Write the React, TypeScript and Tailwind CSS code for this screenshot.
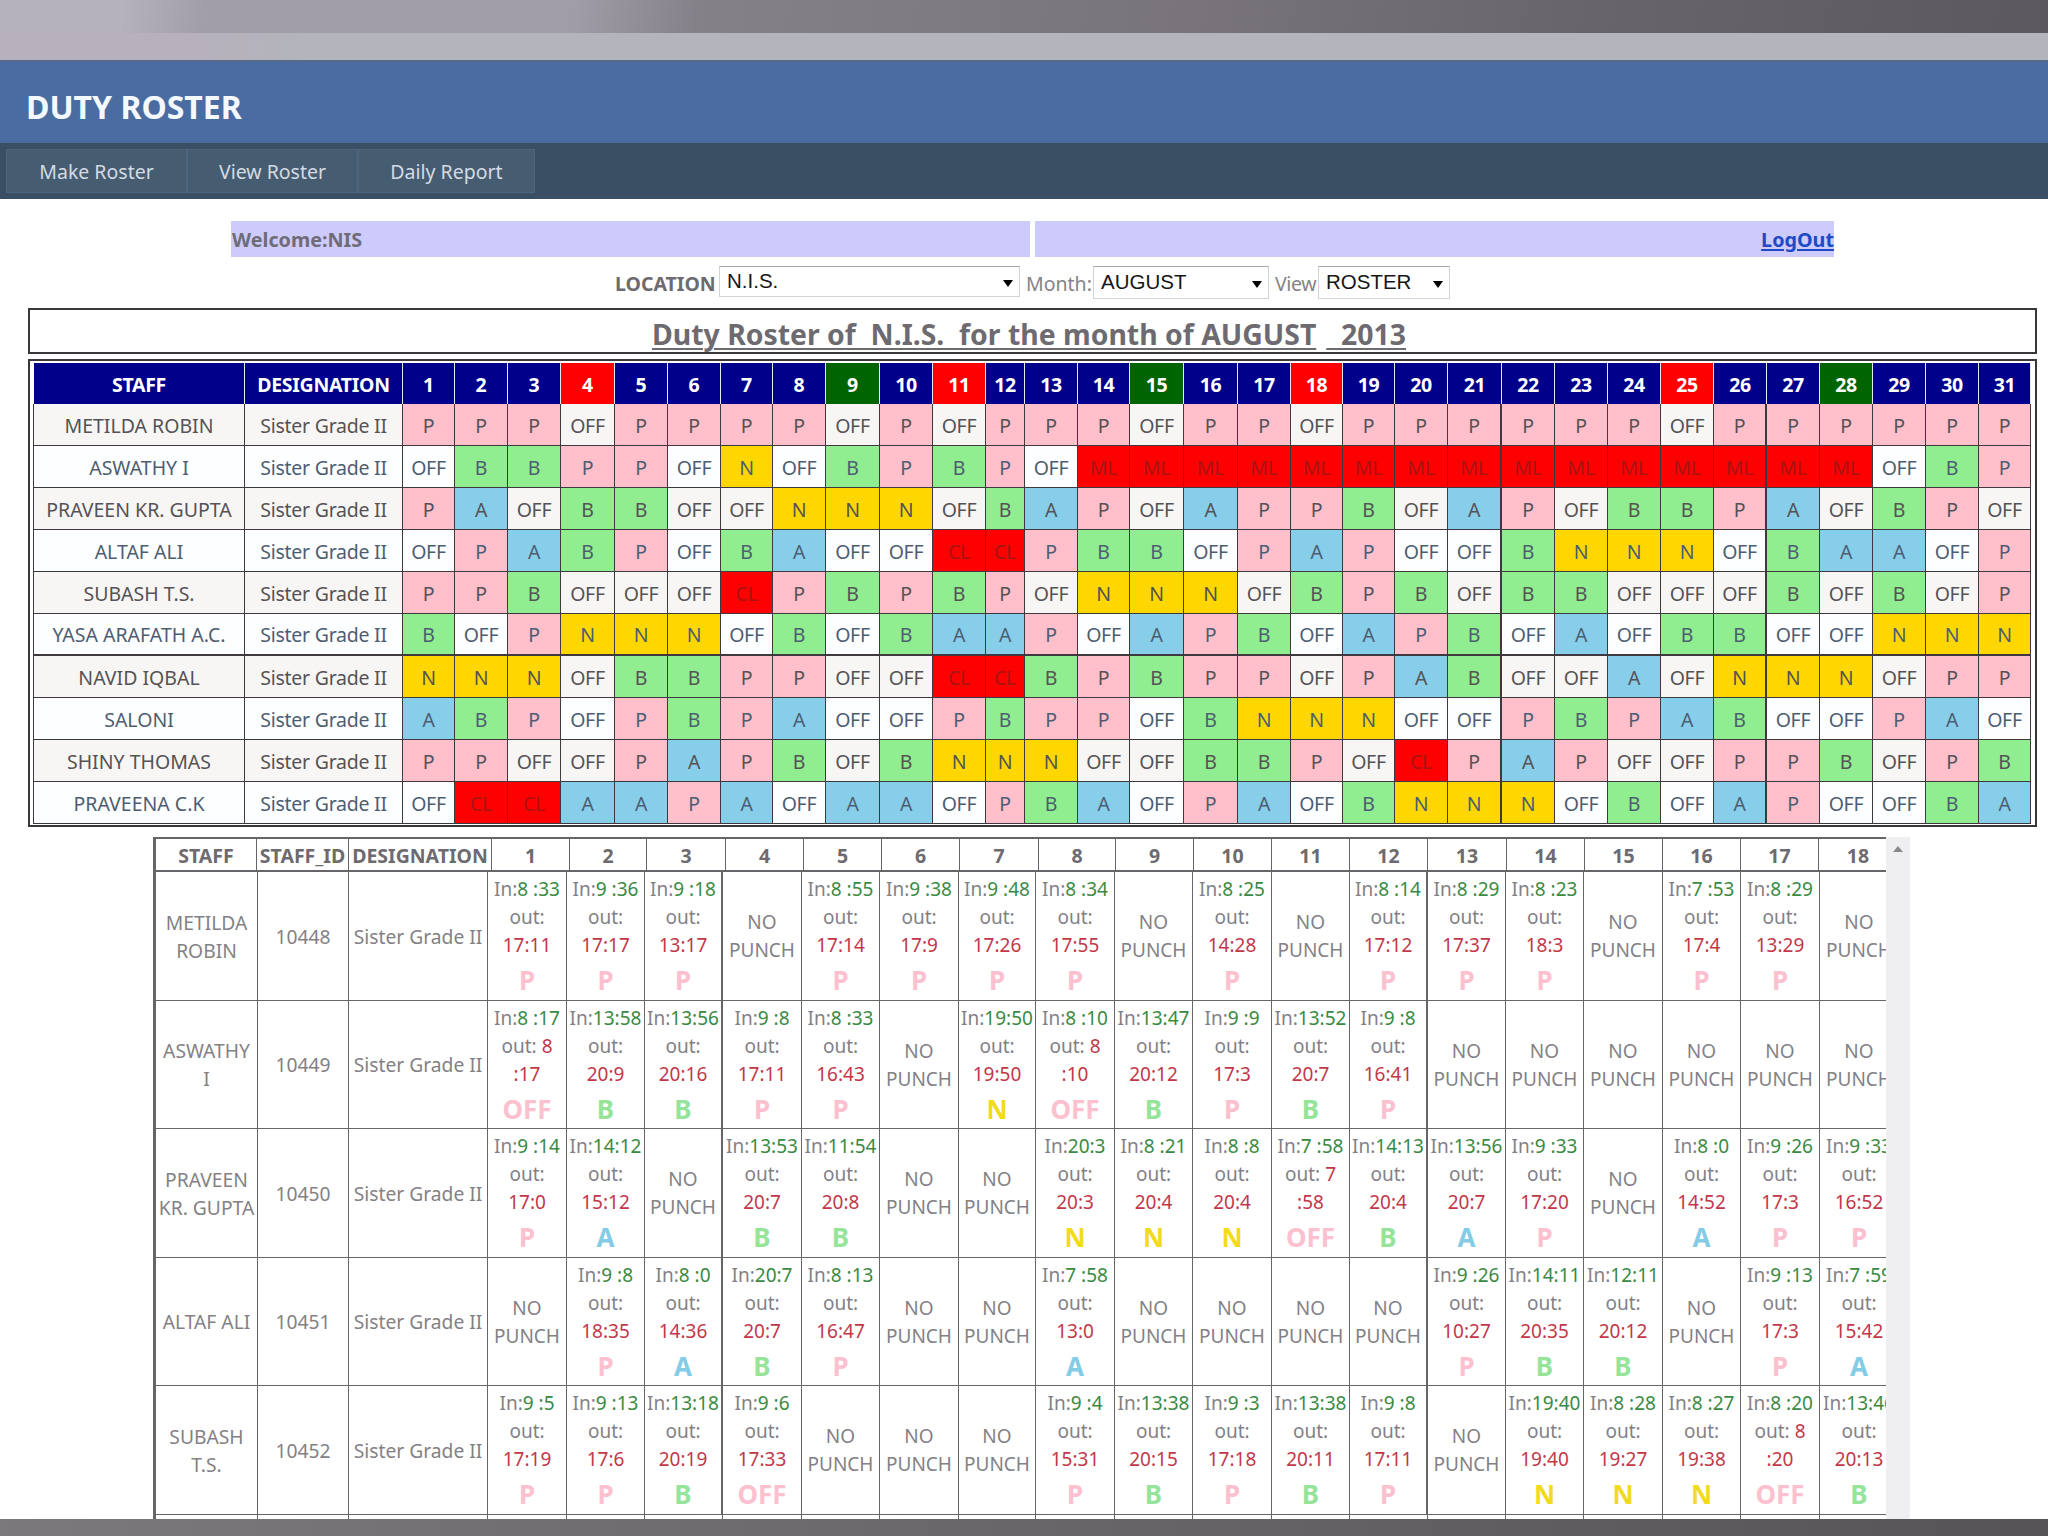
import clsx from 'clsx';

type Shift = 'P' | 'B' | 'A' | 'N' | 'OFF' | 'CL' | 'ML';

type RosterRow = {
  name: string;
  shifts: string;
};

type PunchRow = {
  name: string;
  id: string;
  punches: string[];
};

const MENU = [
  { label: 'Make Roster', className: 'w-[181px]' },
  { label: 'View Roster', className: 'w-[171px]' },
  { label: 'Daily Report', className: 'w-[177px]' },
];

const DAYS = Array.from({ length: 31 }, (_, i) => i + 1);
const SUNDAYS = [4, 11, 18, 25];
const HOLIDAYS = [9, 15, 28];

const ROSTER: RosterRow[] = [
  {
    name: 'METILDA ROBIN',
    shifts:
      'P P P OFF P P P P OFF P OFF P P P OFF P P OFF P P P P P P OFF P P P P P P',
  },
  {
    name: 'ASWATHY I',
    shifts:
      'OFF B B P P OFF N OFF B P B P OFF ML ML ML ML ML ML ML ML ML ML ML ML ML ML ML OFF B P',
  },
  {
    name: 'PRAVEEN KR. GUPTA',
    shifts:
      'P A OFF B B OFF OFF N N N OFF B A P OFF A P P B OFF A P OFF B B P A OFF B P OFF',
  },
  {
    name: 'ALTAF ALI',
    shifts:
      'OFF P A B P OFF B A OFF OFF CL CL P B B OFF P A P OFF OFF B N N N OFF B A A OFF P',
  },
  {
    name: 'SUBASH T.S.',
    shifts:
      'P P B OFF OFF OFF CL P B P B P OFF N N N OFF B P B OFF B B OFF OFF OFF B OFF B OFF P',
  },
  {
    name: 'YASA ARAFATH A.C.',
    shifts:
      'B OFF P N N N OFF B OFF B A A P OFF A P B OFF A P B OFF A OFF B B OFF OFF N N N',
  },
  {
    name: 'NAVID IQBAL',
    shifts:
      'N N N OFF B B P P OFF OFF CL CL B P B P P OFF P A B OFF OFF A OFF N N N OFF P P',
  },
  {
    name: 'SALONI',
    shifts:
      'A B P OFF P B P A OFF OFF P B P P OFF B N N N OFF OFF P B P A B OFF OFF P A OFF',
  },
  {
    name: 'SHINY THOMAS',
    shifts:
      'P P OFF OFF P A P B OFF B N N N OFF OFF B B P OFF CL P A P OFF OFF P P B OFF P B',
  },
  {
    name: 'PRAVEENA C.K',
    shifts:
      'OFF CL CL A A P A OFF A A OFF P B A OFF P A OFF B N N N OFF B OFF A P OFF OFF B A',
  },
];

// Each punch is "in|out|shift"; an empty string means nobody punched that day.
const PUNCHES: PunchRow[] = [
  {
    name: 'METILDA\nROBIN',
    id: '10448',
    punches: [
      '8 :33|17:11|P', '9 :36|17:17|P', '9 :18|13:17|P', '', '8 :55|17:14|P', '9 :38|17:9|P',
      '9 :48|17:26|P', '8 :34|17:55|P', '', '8 :25|14:28|P', '', '8 :14|17:12|P',
      '8 :29|17:37|P', '8 :23|18:3|P', '', '7 :53|17:4|P', '8 :29|13:29|P', '',
    ],
  },
  {
    name: 'ASWATHY\nI',
    id: '10449',
    punches: [
      '8 :17|8 :17|OFF', '13:58|20:9|B', '13:56|20:16|B', '9 :8|17:11|P', '8 :33|16:43|P', '',
      '19:50|19:50|N', '8 :10|8 :10|OFF', '13:47|20:12|B', '9 :9|17:3|P', '13:52|20:7|B', '9 :8|16:41|P',
      '', '', '', '', '', '',
    ],
  },
  {
    name: 'PRAVEEN\nKR. GUPTA',
    id: '10450',
    punches: [
      '9 :14|17:0|P', '14:12|15:12|A', '', '13:53|20:7|B', '11:54|20:8|B', '',
      '', '20:3|20:3|N', '8 :21|20:4|N', '8 :8|20:4|N', '7 :58|7 :58|OFF', '14:13|20:4|B',
      '13:56|20:7|A', '9 :33|17:20|P', '', '8 :0|14:52|A', '9 :26|17:3|P', '9 :33|16:52|P',
    ],
  },
  {
    name: 'ALTAF ALI',
    id: '10451',
    punches: [
      '', '9 :8|18:35|P', '8 :0|14:36|A', '20:7|20:7|B', '8 :13|16:47|P', '',
      '', '7 :58|13:0|A', '', '', '', '',
      '9 :26|10:27|P', '14:11|20:35|B', '12:11|20:12|B', '', '9 :13|17:3|P', '7 :59|15:42|A',
    ],
  },
  {
    name: 'SUBASH\nT.S.',
    id: '10452',
    punches: [
      '9 :5|17:19|P', '9 :13|17:6|P', '13:18|20:19|B', '9 :6|17:33|OFF', '', '',
      '', '9 :4|15:31|P', '13:38|20:15|B', '9 :3|17:18|P', '13:38|20:11|B', '9 :8|17:11|P',
      '', '19:40|19:40|N', '8 :28|19:27|N', '8 :27|19:38|N', '8 :20|8 :20|OFF', '13:46|20:13|B',
    ],
  },
];

const SHIFT_FILL: Record<Shift, string> = {
  P: 'bg-[#ffbfcb]',
  B: 'bg-[#90ee90]',
  A: 'bg-[#87ceeb]',
  N: 'bg-[#ffd700]',
  OFF: '',
  CL: 'bg-[#ff0000] text-[#a81414]',
  ML: 'bg-[#ff0000] text-[#a81414]',
};

const SHIFT_TEXT: Record<string, string> = {
  P: 'text-[#fcc0cf]',
  OFF: 'text-[#fcc0cf]',
  B: 'text-[#96e49a]',
  A: 'text-[#84cbe6]',
  N: 'text-[#f2da1c]',
};

const ROSTER_COLS =
  'grid-cols-[211px_158px_52px_53px_53px_54px_53px_53px_52px_53px_54px_53px_53px_39px_53px_52px_54px_54px_53px_52px_52px_53px_54px_53px_53px_53px_53px_53px_53px_53px_53px_53px_52px]';

const PUNCH_HEAD_COLS =
  'grid-cols-[101px_92px_143px_78px_77px_79px_78px_78px_78px_79px_77px_78px_78px_78px_78px_79px_78px_78px_78px_78px_79px]';

const PUNCH_COLS =
  'grid-cols-[102px_91px_139px_79px_78px_78px_79px_78px_79px_77px_79px_78px_79px_78px_78px_78px_78px_79px_78px_79px_79px]';

const Select = ({ value, className }: { value: string; className: string }) => (
  <div
    className={clsx(
      'flex items-center justify-between border border-[#d4d4d8] border-t-[#a9a9ad] bg-white pl-[7px] pr-[6px] font-["Liberation_Sans",Arial,sans-serif] text-[20.5px] leading-none text-[#161616]',
      className,
    )}
  >
    {value}
    <svg viewBox="0 0 10 7" className="mt-1 h-[7px] w-[10px]">
      <path d="M0 0h10L5 7z" fill="#000" />
    </svg>
  </div>
);

const Roster = () => (
  <div className="ml-[28px] mt-[5px] h-[468px] w-[2009px] border-2 border-[#3a363c] pl-[3px] pt-[2px]">
    <div className={clsx('grid h-[41px] pl-px', ROSTER_COLS)}>
      {['STAFF', 'DESIGNATION', ...DAYS].map((head) => (
        <div
          key={head}
          className={clsx(
            'flex items-center justify-center border-r border-[#e6e6f5] pt-0.5 text-[19.5px] font-bold tracking-[-0.3px] text-white',
            SUNDAYS.includes(Number(head)) && 'bg-[#ff0000]',
            HOLIDAYS.includes(Number(head)) && 'bg-[#006400]',
            !SUNDAYS.includes(Number(head)) &&
              !HOLIDAYS.includes(Number(head)) &&
              'bg-[#00008b]',
          )}
        >
          {head}
        </div>
      ))}
    </div>
    {ROSTER.map((row, i) => (
      <div
        key={row.name}
        className={clsx(
          'grid h-[42px] w-[1998px] border-l border-[#3d393f] text-[19.5px]',
          ROSTER_COLS,
          i % 2 === 0 ? 'bg-[#f8f6f4] text-[#555255]' : 'bg-[#fdfeff] text-[#4d5d72]',
        )}
      >
        {[row.name, 'Sister Grade II', ...row.shifts.split(' ')].map((text, col) => (
          <div
            key={col}
            className={clsx(
              'flex items-center justify-center whitespace-nowrap border-b border-r border-[#3d393f] pt-0.5',
              col > 0 && 'tracking-[-0.25px]',
              i === 5 && 'border-b-2',
              (col === 22 || col === 27) && 'border-r-2',
              SHIFT_FILL[text as Shift],
            )}
          >
            {text}
          </div>
        ))}
      </div>
    ))}
  </div>
);

const Punch = ({ value }: { value: string }) => {
  if (!value) {
    return (
      <div className="whitespace-pre-line pb-px text-center">{'NO\nPUNCH'}</div>
    );
  }

  const [timeIn, timeOut, shift] = value.split('|');
  // single-digit hours carry a trailing space, so the hour stays beside "out:"
  const [hour, rest] = timeOut.includes(' ') ? timeOut.split(' ') : ['', timeOut];

  return (
    <div className="h-full whitespace-nowrap pt-[3px] text-center">
      <div>
        In:<span className="text-[#3a8a44]">{timeIn}</span>
      </div>
      <div>
        out: <span className="text-[#c2384a]">{hour}</span>
      </div>
      <div className="text-[#c2384a]">{rest}</div>
      <div className={clsx('text-[26px] font-bold leading-[42px]', SHIFT_TEXT[shift])}>
        {shift}
      </div>
    </div>
  );
};

const PunchReport = () => (
  <div className="ml-[153px] mt-[10px] flex h-[682px]">
    <div className="w-[1733px] overflow-hidden border-l-[3px] border-t-2 border-[#67646a] text-[#838186]">
      <div
        className={clsx(
          'grid h-[33px] w-max border-b-2 border-[#67646a] text-[19.5px] font-bold text-[#6d6a70]',
          PUNCH_HEAD_COLS,
        )}
      >
        {['STAFF', 'STAFF_ID', 'DESIGNATION', ...DAYS.slice(0, 18)].map((head) => (
          <div
            key={head}
            className="flex items-center justify-center border-r border-[#67646a] pt-0.5"
          >
            {head}
          </div>
        ))}
      </div>
      {PUNCHES.map((row) => (
        <div
          key={row.id}
          className={clsx(
            'grid h-[128.6px] w-max border-b border-[#67646a] text-[19px] leading-[28px]',
            PUNCH_COLS,
          )}
        >
          {[row.name, row.id, 'Sister Grade II'].map((text) => (
            <div
              key={text}
              className="flex items-center justify-center whitespace-pre border-r border-[#67646a] text-center text-[19.25px]"
            >
              {text}
            </div>
          ))}
          {row.punches.map((value, i) => (
            <div
              key={i}
              className={clsx(
                'flex items-center justify-center border-r border-[#67646a]',
                (i === 2 || i === 11) && 'border-r-2',
              )}
            >
              <Punch value={value} />
            </div>
          ))}
        </div>
      ))}
      <div className={clsx('grid h-[10px] w-max', PUNCH_COLS)}>
        {Array.from({ length: 21 }, (_, i) => (
          <div key={i} className="border-r border-[#67646a]" />
        ))}
      </div>
    </div>
    <div className="flex w-6 justify-center bg-[#efeef0] pt-[9px]">
      <svg viewBox="0 0 10 6" className="h-[6px] w-[10px]">
        <path d="M0 6h10L5 0z" fill="#8a888c" />
      </svg>
    </div>
  </div>
);

const App = () => (
  <div className="flex h-[1536px] w-[2048px] flex-col overflow-hidden bg-white font-['Noto_Sans','Open_Sans',sans-serif]">
    <div className="h-[33px] shrink-0 bg-[linear-gradient(97deg,#b5b1bd_6%,#a19eaa_10%,#a09da8_28%,#858189_34%,#78747a_58%,#68656a_78%,#5b595d_100%)]" />
    <div className="h-[27px] shrink-0 bg-[linear-gradient(90deg,#b6b1bc_10%,#b3b4bc_15%)]" />

    <header className="flex h-[83px] shrink-0 items-center border-t-2 border-[#56688c] bg-[#4b6ca1] pl-[26px] pt-[14px] pb-[5px]">
      <h1 className="text-[32px] font-bold leading-none text-[#f4f9ff]">DUTY ROSTER</h1>
    </header>

    <nav className="flex h-[56px] shrink-0 bg-[#3a4f63] pl-[6px] pt-[6px]">
      {MENU.map((item) => (
        <a
          key={item.label}
          className={clsx(
            'flex h-[44px] items-center justify-center border border-[#4e667d] bg-[#465c71] pt-0.5 text-[19.5px] text-[#d3dbe3]',
            item.className,
          )}
        >
          {item.label}
        </a>
      ))}
    </nav>

    <div className="ml-[231px] mt-[22px] flex gap-[5px] text-[19.75px] font-bold leading-[38px]">
      <div className="h-[36px] w-[799px] bg-[#cdcbfc] pl-px text-[#6f6c78]">Welcome:NIS</div>
      <div className="h-[36px] w-[799px] bg-[#cdcbfc] text-right">
        <a className="text-[#2049c8] underline decoration-2 underline-offset-2">LogOut</a>
      </div>
    </div>

    <div className="ml-[615px] mt-[9px] flex h-[33px] items-start text-[19.5px] leading-[35px] text-[#858388]">
      <b className="w-[104px] text-[#6d6a70]">LOCATION</b>
      <Select value="N.I.S." className="h-[31px] w-[301px]" />
      <span className="ml-[6px] w-[67px]">Month:</span>
      <Select value="AUGUST" className="h-[33px] w-[176px]" />
      <span className="ml-[6px] w-[43px] tracking-[-0.4px]">View</span>
      <Select value="ROSTER" className="h-[33px] w-[132px]" />
    </div>

    <div className="ml-[28px] mt-[9px] flex h-[46px] w-[2009px] shrink-0 gap-[10px] whitespace-pre border-2 border-[#3a363c] pl-[622px] text-[28.4px] font-bold leading-[48px] text-[#6d6a70]">
      <u className="decoration-2 underline-offset-[3px]">
        Duty Roster of  N.I.S.  for the month of AUGUST
      </u>
      <u className="decoration-2 underline-offset-[3px]">{'  2013'}</u>
    </div>

    <Roster />
    <PunchReport />

    <div className="h-[17px] shrink-0 bg-linear-to-r from-[#7b797c] to-[#575458]" />
  </div>
);

export default App;
